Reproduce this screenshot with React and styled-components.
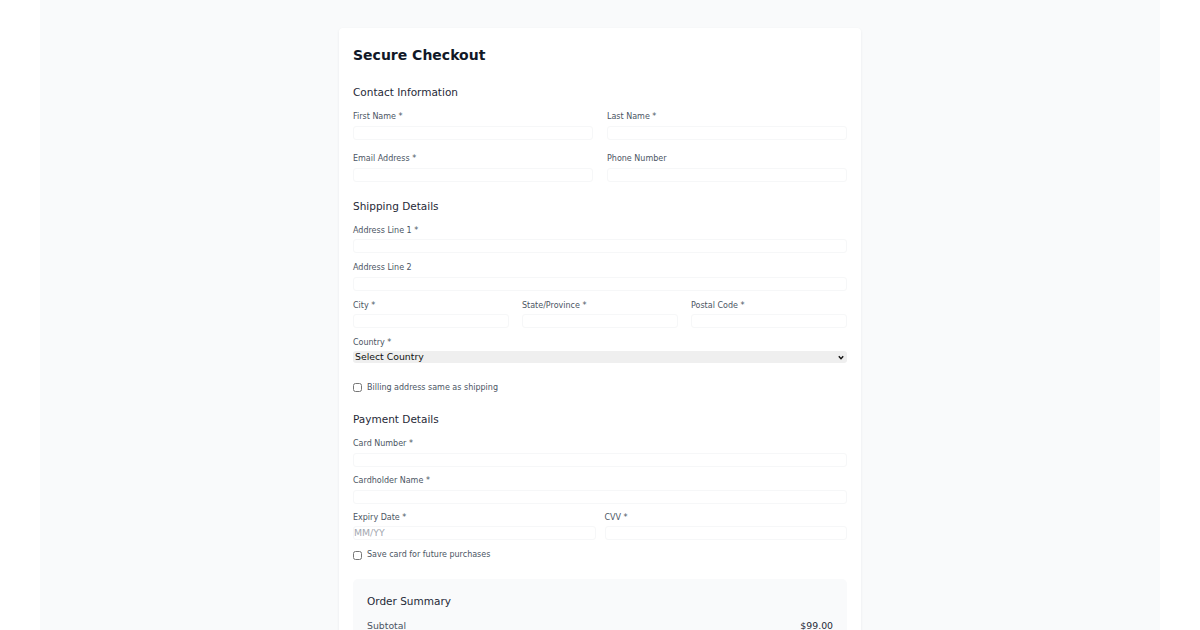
import React from 'react';
import styled, { createGlobalStyle } from 'styled-components';

const Global = createGlobalStyle`
  html, body {
    margin: 0;
    padding: 0;
    background: #ffffff;
    overflow: hidden;
  }
  body {
    font-family: 'DejaVu Sans', 'Liberation Sans', sans-serif;
  }
  * { box-sizing: border-box; }
`;

const Page = styled.div`
  width: 1120px;
  margin: 0 auto;
  min-height: 100vh;
  background: #f9fafb;
  padding-top: 28px;
`;

const Card = styled.form`
  width: 522px;
  margin: 0 auto;
  background: #ffffff;
  border-radius: 4px;
  box-shadow: 0 1px 3px rgba(17, 24, 39, 0.07);
  padding: 19px 14px 20px;
`;

const Title = styled.h1`
  margin: 0 0 22px;
  font-size: 14px;
  line-height: 17px;
  font-weight: 700;
  color: #111827;
`;

const Section = styled.section`
  margin-bottom: ${p => p.$mb}px;
`;

const SectionTitle = styled.h2`
  margin: 0 0 13.5px;
  font-size: 10.5px;
  line-height: 12.6px;
  font-weight: 400;
  color: #1f2937;
`;

const Stack = styled.div`
  display: flex;
  flex-direction: column;
  gap: ${p => p.$gap ?? 9.8}px;
`;

const Grid = styled.div`
  display: grid;
  grid-template-columns: repeat(${p => p.$cols}, 1fr);
  column-gap: ${p => p.$gap}px;
  row-gap: ${p => p.$rowGap || 0}px;
`;

const Field = styled.div`
  display: flex;
  flex-direction: column;
`;

const Label = styled.label`
  display: block;
  font-size: 8px;
  line-height: 9.6px;
  color: #4b5563;
  margin-bottom: ${p => p.$mb ?? 4}px;
`;

const Input = styled.input`
  height: 14px;
  width: 100%;
  margin: 0;
  padding: 0 0 1px;
  border: 1px solid #f6f7f8;
  border-radius: 3px;
  background: #ffffff;
  font-family: inherit;
  font-size: 9.33px;
  color: #111827;
  outline: none;
  &::placeholder {
    color: #a3a8b0;
  }
`;

const SelectWrap = styled.div`
  position: relative;
  svg {
    position: absolute;
    right: 3px;
    top: 4px;
    width: 6px;
    height: 5px;
    pointer-events: none;
  }
`;

const Select = styled.select`
  display: block;
  height: 12px;
  width: 100%;
  margin: 0;
  padding: 0 2px;
  border: none;
  border-radius: 3px;
  background-color: #efefef;
  appearance: none;
  font-family: inherit;
  font-size: 9.33px;
  line-height: 12px;
  color: #111111;
  outline: none;
`;

const CheckRow = styled.label`
  display: flex;
  align-items: center;
  gap: 5px;
  margin-top: ${p => p.$mt || 0}px;
  font-size: 8px;
  line-height: 9.6px;
  color: #4b5563;
  input {
    width: 9px;
    height: 9px;
    margin: 0;
  }
`;

const Summary = styled.div`
  background: #f9fafb;
  border-radius: 5px;
  padding: 16px 14px;
`;

const SummaryTitle = styled.h3`
  margin: 0 0 12px;
  font-size: 10.5px;
  line-height: 12.6px;
  font-weight: 400;
  color: #1f2937;
`;

const SummaryRow = styled.div`
  display: flex;
  justify-content: space-between;
  font-size: 9.33px;
  line-height: 11.2px;
  color: ${p => (p.$total ? '#111827' : '#4b5563')};
  font-weight: ${p => (p.$total ? 700 : 400)};
  margin-bottom: 6px;
  span:last-child {
    color: #1f2937;
  }
`;

const PayButton = styled.button`
  width: 100%;
  margin-top: 14px;
  height: 28px;
  border: none;
  border-radius: 4px;
  background: #2563eb;
  color: #fff;
  font-family: inherit;
  font-size: 10px;
`;

const TextField = ({ label, placeholder, required }) => (
  <Field>
    <Label>{label}{required ? ' *' : ''}</Label>
    <Input type="text" placeholder={placeholder} />
  </Field>
);

const App = () => {
  return (
    <>
      <Global />
      <Page>
        <Card onSubmit={e => e.preventDefault()}>
          <Title>Secure Checkout</Title>

          <Section $mb={18}>
            <SectionTitle>Contact Information</SectionTitle>
            <Grid $cols={2} $gap={14} $rowGap={14.4}>
              <TextField label="First Name" required />
              <TextField label="Last Name" required />
              <TextField label="Email Address" required />
              <TextField label="Phone Number" />
            </Grid>
          </Section>

          <Section $mb={21}>
            <SectionTitle>Shipping Details</SectionTitle>
            <Stack>
              <TextField label="Address Line 1" required />
              <TextField label="Address Line 2" />
              <Grid $cols={3} $gap={13}>
                <TextField label="City" required />
                <TextField label="State/Province" required />
                <TextField label="Postal Code" required />
              </Grid>
              <Field>
                <Label $mb={3.4}>Country *</Label>
                <SelectWrap>
                  <Select defaultValue="">
                    <option value="">Select Country</option>
                    <option value="us">United States</option>
                    <option value="ca">Canada</option>
                    <option value="gb">United Kingdom</option>
                  </Select>
                  <svg viewBox="0 0 6 5" aria-hidden="true">
                    <path d="M0.8 1.2 L3 3.6 L5.2 1.2" fill="none" stroke="#111" strokeWidth="1.4" />
                  </svg>
                </SelectWrap>
              </Field>
              <CheckRow $mt={10}>
                <input type="checkbox" />
                Billing address same as shipping
              </CheckRow>
            </Stack>
          </Section>

          <Section $mb={19}>
            <SectionTitle>Payment Details</SectionTitle>
            <Stack $gap={9.1}>
              <TextField label="Card Number" required />
              <TextField label="Cardholder Name" required />
              <Grid $cols={2} $gap={9}>
                <TextField label="Expiry Date" placeholder="MM/YY" required />
                <TextField label="CVV" required />
              </Grid>
              <CheckRow $mt={1}>
                <input type="checkbox" />
                Save card for future purchases
              </CheckRow>
            </Stack>
          </Section>

          <Summary>
            <SummaryTitle>Order Summary</SummaryTitle>
            <SummaryRow><span>Subtotal</span><span>$99.00</span></SummaryRow>
            <SummaryRow><span>Shipping</span><span>$0.00</span></SummaryRow>
            <SummaryRow><span>Tax</span><span>$8.91</span></SummaryRow>
            <SummaryRow $total><span>Total</span><span>$107.91</span></SummaryRow>
          </Summary>
          <PayButton type="submit">Complete Purchase</PayButton>
        </Card>
      </Page>
    </>
  );
};

export default App;
